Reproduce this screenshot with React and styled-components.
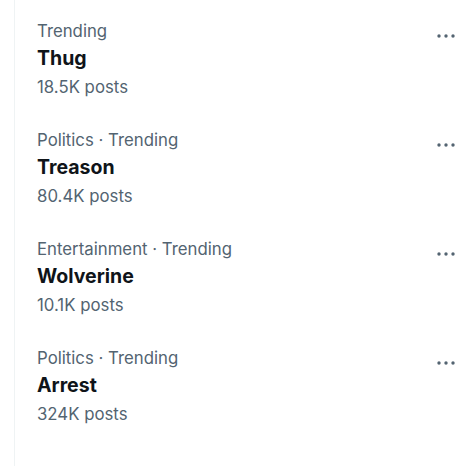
import React from "react";
import styled, { createGlobalStyle } from "styled-components";

const GlobalStyle = createGlobalStyle`
  * {
    margin: 0;
    padding: 0;
    box-sizing: border-box;
  }

  body {
    background: #ffffff;
    font-family: "Inter", "Roboto", sans-serif;
    color: #0f1419;
  }
`;

const Panel = styled.section`
  margin-left: 14px;
  min-height: 466px;
  border-left: 1px solid #eff3f4;
  display: flex;
  flex-direction: column;
`;

const Row = styled.div`
  display: flex;
  justify-content: space-between;
  align-items: flex-start;
  padding: 20px 18px 10px 22px;
  height: 109px;
`;

const Info = styled.div`
  display: flex;
  flex-direction: column;
`;

const Meta = styled.span`
  font-size: 16.8px;
  line-height: 22px;
  color: #536471;
`;

const Title = styled.span`
  font-size: 19.5px;
  line-height: 28px;
  margin-top: 2px;
  font-weight: 700;
  color: #0f1419;
`;

const Count = styled(Meta)`
  margin-top: 3px;
  line-height: 24px;
`;

const More = styled.button`
  border: none;
  background: none;
  width: 20px;
  height: 20px;
  margin-top: 6px;
  display: flex;
  align-items: center;
  justify-content: center;
  cursor: pointer;
`;

const trends = [
  { meta: "Trending", title: "Thug", count: "18.5K posts" },
  { meta: "Politics · Trending", title: "Treason", count: "80.4K posts" },
  { meta: "Entertainment · Trending", title: "Wolverine", count: "10.1K posts" },
  { meta: "Politics · Trending", title: "Arrest", count: "324K posts" },
];

const Dots = () => (
  <svg width="20" height="6" viewBox="0 0 20 6">
    <circle cx="3" cy="3" r="1.7" fill="#536471" />
    <circle cx="10" cy="3" r="1.7" fill="#536471" />
    <circle cx="17" cy="3" r="1.7" fill="#536471" />
  </svg>
);

const App = () => (
  <>
    <GlobalStyle />
    <Panel>
      {trends.map((t, i) => (
        <Row key={i}>
          <Info>
            <Meta>{t.meta}</Meta>
            <Title>{t.title}</Title>
            <Count>{t.count}</Count>
          </Info>
          <More aria-label="More">
            <Dots />
          </More>
        </Row>
      ))}
    </Panel>
  </>
);

export default App;
